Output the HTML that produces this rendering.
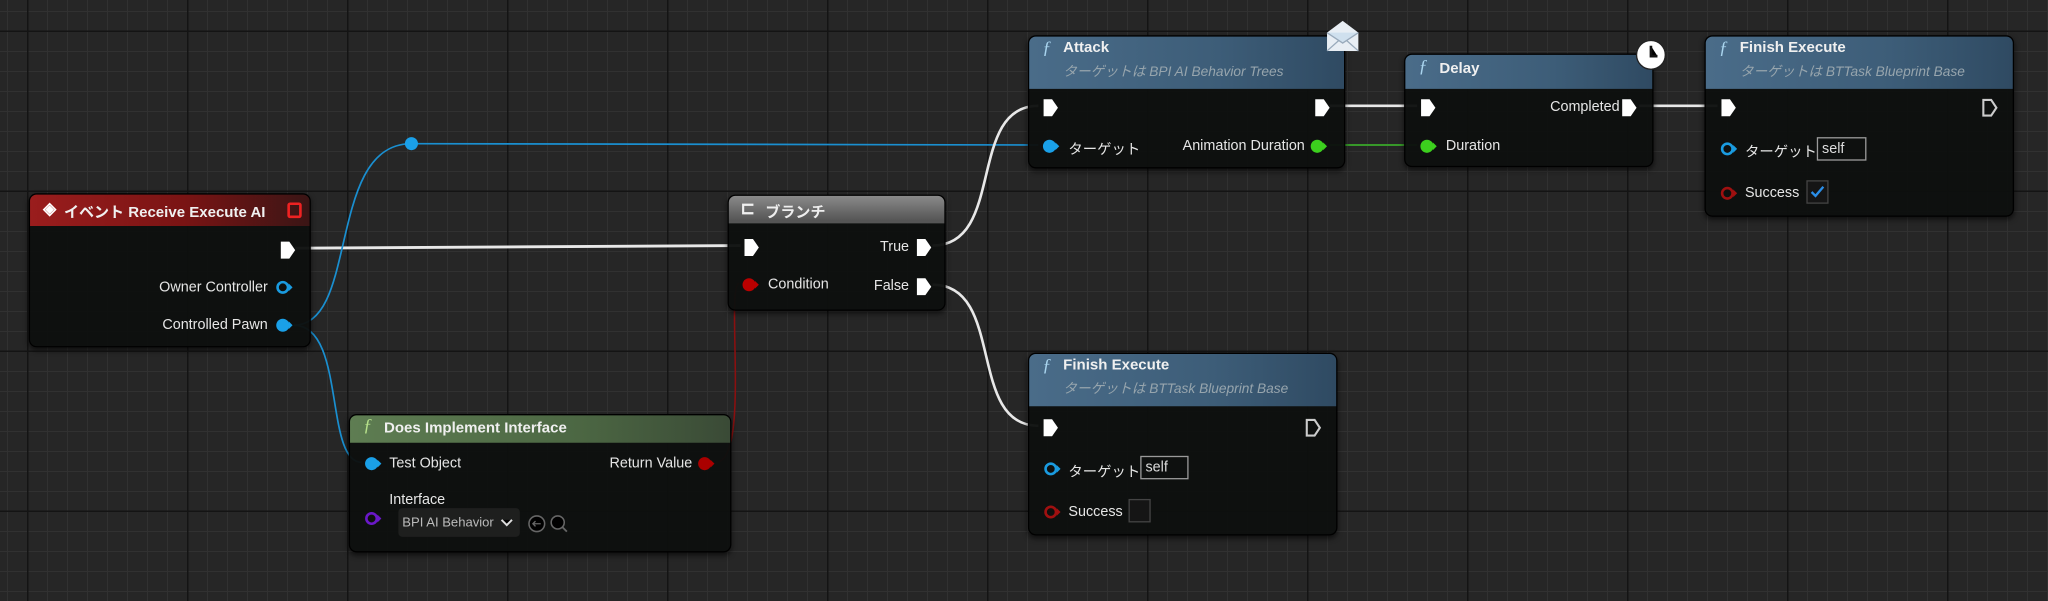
<!DOCTYPE html>
<html><head><meta charset="utf-8">
<style>
html,body{margin:0;padding:0;width:2048px;height:601px;overflow:hidden;}
body{background-color:#262626;
background-image:
linear-gradient(90deg,#141414 1.5px,transparent 1.5px),
linear-gradient(0deg,#141414 1.5px,transparent 1.5px),
linear-gradient(90deg,#313131 1px,transparent 1px),
linear-gradient(0deg,#313131 1px,transparent 1px);
background-size:160px 160px,160px 160px,20px 20px,20px 20px;
background-position:27px 0,0 32px,7px 0,0 12px;
font-family:"Liberation Sans","Noto Sans CJK JP",sans-serif;}
#c{position:absolute;left:0;top:0;width:1568px;height:460px;transform:scale(1.30612);transform-origin:0 0;}
.n{position:absolute;background:rgba(14,16,15,0.96);border:1px solid #000;border-radius:6px;box-shadow:0 2px 4px rgba(0,0,0,.6);overflow:visible;}
.h{position:absolute;left:0;top:0;right:0;border-radius:5px 5px 0 0;color:#f0f0f0;font-weight:bold;font-size:11.5px;}
.h .t{position:absolute;left:26px;top:3px;}
.h .s{position:absolute;left:26px;top:19px;font-style:italic;font-weight:normal;font-size:10.5px;color:#97a5ad;}
.h .f{position:absolute;left:10px;top:2px;font-family:"Liberation Serif",serif;font-style:italic;font-weight:normal;font-size:14px;color:#a9d4ee;}
.blue{background:linear-gradient(90deg,#4a6c89,#3d5d78 60%,#2f4a62);height:40px;}
.lbl{position:absolute;color:#e6e6e6;font-size:11px;white-space:nowrap;}
.box{position:absolute;border:1px solid #9a9a9a;color:#ddd;font-size:11px;padding:0 3px;height:16px;line-height:16px;}
</style></head><body>
<div id="c">
<svg width="1568" height="460" style="position:absolute;left:0;top:0" fill="none">
<path d="M226 190 C400 190 400 188 567 188" stroke="#e8e8e8" stroke-width="2.2"/>
<path d="M225 249 C275 249 250 110 315 110 L795 111" stroke="#1a8fd0" stroke-width="1.3"/>
<path d="M225 249 C265 249 248 354 277 354" stroke="#1a8fd0" stroke-width="1.3"/>
<path d="M714 188 C770 188 740 81 795 81" stroke="#e8e8e8" stroke-width="2"/>
<path d="M714 218 C770 218 740 326 795 326" stroke="#e8e8e8" stroke-width="2"/>
<path d="M1018 81 L1085 81" stroke="#e8e8e8" stroke-width="2"/>
<path d="M1018 111 L1085 111" stroke="#3aa82a" stroke-width="1.3"/>
<path d="M1255 81 L1315 81" stroke="#e8e8e8" stroke-width="2"/>
<path d="M548 354 C575 354 555 217 566 217" stroke="#8a1010" stroke-width="1.2"/>
<circle cx="315" cy="110" r="5" fill="#1aa0e8"/>
</svg>

<!-- Event -->
<div class="n" style="left:22px;top:148px;width:214px;height:116px;">
 <div class="h" style="height:24px;background:linear-gradient(90deg,#9a1d1d,#7a1414 55%,#3a1515);">
  <span style="position:absolute;left:10px;top:3px;color:#fff;font-size:13px;">◈</span>
  <span class="t" style="top:5px;">イベント Receive Execute AI</span>
  <span style="position:absolute;right:6px;top:6px;width:7px;height:8px;border:2px solid #e22;border-radius:2px;"></span>
 </div>
 <svg style="position:absolute;left:191px;top:35px" width="13" height="15"><path d="M1 1h6.5l4.5 6.5-4.5 6.5H1z" fill="#fff"/></svg>
 <div class="lbl" style="right:32px;top:65px;">Owner Controller</div>
 <svg style="position:absolute;left:188px;top:65px" width="14" height="12"><circle cx="5.5" cy="6" r="4" stroke="#1a9be0" stroke-width="2" fill="none"/><path d="M10 3l3 3-3 3z" fill="#1a9be0"/></svg>
 <div class="lbl" style="right:32px;top:94px;">Controlled Pawn</div>
 <svg style="position:absolute;left:188px;top:94px" width="14" height="12"><circle cx="5.5" cy="6" r="5" fill="#1aa0e8"/><path d="M10 3l3 3-3 3z" fill="#1aa0e8"/></svg>
</div>

<!-- Branch -->
<div class="n" style="left:557px;top:149px;width:165px;height:87px;">
 <div class="h" style="height:21px;background:linear-gradient(180deg,#8a8a8a,#555 90%);">
  <span style="position:absolute;left:9px;top:2px;font-size:13px;">⊏</span>
  <span class="t" style="left:28px;top:4px;color:#eee;">ブランチ</span>
 </div>
 <svg style="position:absolute;left:11px;top:32px" width="13" height="15"><path d="M1 1h6.5l4.5 6.5-4.5 6.5H1z" fill="#fff"/></svg>
 <div class="lbl" style="right:27px;top:33px;">True</div>
 <svg style="position:absolute;left:143px;top:32px" width="13" height="15"><path d="M1 1h6.5l4.5 6.5-4.5 6.5H1z" fill="#fff"/></svg>
 <svg style="position:absolute;left:10px;top:62px" width="14" height="12"><circle cx="5.5" cy="6" r="5" fill="#b00"/><path d="M10 3l3 3-3 3z" fill="#b00"/></svg>
 <div class="lbl" style="left:30px;top:62px;">Condition</div>
 <div class="lbl" style="right:27px;top:63px;">False</div>
 <svg style="position:absolute;left:143px;top:62px" width="13" height="15"><path d="M1 1h6.5l4.5 6.5-4.5 6.5H1z" fill="#fff"/></svg>
</div>

<!-- Does Implement Interface -->
<div class="n" style="left:267px;top:317px;width:291px;height:104px;">
 <div class="h" style="height:21px;background:linear-gradient(90deg,#5e7d52,#4c6743 60%,#3a4a36);">
  <span class="f" style="top:1px;color:#b5e08a;">ƒ</span><span class="t" style="top:4px;">Does Implement Interface</span>
 </div>
 <svg style="position:absolute;left:11px;top:31px" width="14" height="12"><circle cx="5.5" cy="6" r="5" fill="#1aa0e8"/><path d="M10 3l3 3-3 3z" fill="#1aa0e8"/></svg>
 <div class="lbl" style="left:30px;top:31px;">Test Object</div>
 <div class="lbl" style="right:29px;top:31px;">Return Value</div>
 <svg style="position:absolute;left:266px;top:31px" width="14" height="12"><circle cx="5.5" cy="6" r="5" fill="#a00"/><path d="M10 3l3 3-3 3z" fill="#a00"/></svg>
 <div class="lbl" style="left:30px;top:59px;">Interface</div>
 <svg style="position:absolute;left:11px;top:73px" width="14" height="12"><circle cx="5.5" cy="6" r="4" stroke="#6a18c8" stroke-width="2" fill="none"/><path d="M10 3l3 3-3 3z" fill="#6a18c8"/></svg>
 <div style="position:absolute;left:37px;top:71px;width:93px;height:22px;background:#1e1f1e;border-radius:3px;"></div>
 <div class="lbl" style="left:40px;top:77px;font-size:10px;color:#bbb;">BPI AI Behavior</div>
 <svg style="position:absolute;left:114px;top:77px" width="12" height="10"><path d="M2 3l4 4 4-4" stroke="#ddd" stroke-width="1.5"/></svg>
 <svg style="position:absolute;left:136px;top:75px" width="34" height="16"><circle cx="7" cy="8" r="6" stroke="#666" stroke-width="1.2"/><path d="M10 8H4m2-2-2 2 2 2" stroke="#666"/><circle cx="23" cy="7" r="5" stroke="#666" stroke-width="1.2"/><path d="M26.5 10.5 30 14" stroke="#666" stroke-width="1.4"/></svg>
</div>

<!-- Attack -->
<div class="n" style="left:787px;top:27px;width:241px;height:100px;">
 <div class="h blue"><span class="f">ƒ</span><span class="t">Attack</span><span class="s">ターゲットは BPI AI Behavior Trees</span></div>
 <svg style="position:absolute;left:10px;top:47px" width="13" height="15"><path d="M1 1h6.5l4.5 6.5-4.5 6.5H1z" fill="#fff"/></svg>
 <svg style="position:absolute;left:218px;top:47px" width="13" height="15"><path d="M1 1h6.5l4.5 6.5-4.5 6.5H1z" fill="#fff"/></svg>
 <svg style="position:absolute;left:10px;top:78px" width="14" height="12"><circle cx="5.5" cy="6" r="5" fill="#1aa0e8"/><path d="M10 3l3 3-3 3z" fill="#1aa0e8"/></svg>
 <div class="lbl" style="left:30px;top:78px;">ターゲット</div>
 <div class="lbl" style="right:30px;top:78px;">Animation Duration</div>
 <svg style="position:absolute;left:215px;top:78px" width="14" height="12"><circle cx="5.5" cy="6" r="5" fill="#3ccf1e"/><path d="M10 3l3 3-3 3z" fill="#3ccf1e"/></svg>
</div>
<svg style="position:absolute;left:1014px;top:15px" width="28" height="26"><path d="M2 10 14 1l12 9v14H2z" fill="#e8eef4"/><path d="M2 10l12 8 12-8" stroke="#9ab" stroke-width="1" fill="#cfe0ee"/><path d="M2 24l9-8m15 8-9-8" stroke="#9ab"/></svg>

<!-- Delay -->
<div class="n" style="left:1075px;top:41px;width:189px;height:85px;">
 <div class="h blue" style="height:26px;"><span class="f">ƒ</span><span class="t" style="top:5px;">Delay</span></div>
 <svg style="position:absolute;left:11px;top:33px" width="13" height="15"><path d="M1 1h6.5l4.5 6.5-4.5 6.5H1z" fill="#fff"/></svg>
 <div class="lbl" style="right:25px;top:34px;">Completed</div>
 <svg style="position:absolute;left:165px;top:33px" width="13" height="15"><path d="M1 1h6.5l4.5 6.5-4.5 6.5H1z" fill="#fff"/></svg>
 <svg style="position:absolute;left:11px;top:64px" width="14" height="12"><circle cx="5.5" cy="6" r="5" fill="#3ccf1e"/><path d="M10 3l3 3-3 3z" fill="#3ccf1e"/></svg>
 <div class="lbl" style="left:31px;top:64px;">Duration</div>
</div>
<svg style="position:absolute;left:1251px;top:29px" width="26" height="26"><circle cx="13" cy="13" r="11" fill="#fff" stroke="#222" stroke-width="1"/><path d="M13 6v8h5" stroke="#111" stroke-width="2"/></svg>

<!-- Finish Execute top -->
<div class="n" style="left:1305px;top:27px;width:235px;height:137px;">
 <div class="h blue"><span class="f">ƒ</span><span class="t">Finish Execute</span><span class="s">ターゲットは BTTask Blueprint Base</span></div>
 <svg style="position:absolute;left:11px;top:47px" width="13" height="15"><path d="M1 1h6.5l4.5 6.5-4.5 6.5H1z" fill="#fff"/></svg>
 <svg style="position:absolute;left:211px;top:47px" width="13" height="15"><path d="M1.5 1.5h6l4 6-4 6h-6z" stroke="#ccc" stroke-width="1.6" fill="none"/></svg>
 <svg style="position:absolute;left:11px;top:80px" width="14" height="12"><circle cx="5.5" cy="6" r="4" stroke="#1a9be0" stroke-width="2" fill="none"/><path d="M10 3l3 3-3 3z" fill="#1a9be0"/></svg>
 <div class="lbl" style="left:30px;top:80px;">ターゲット</div>
 <div class="box" style="left:85px;top:77px;width:30px;">self</div>
 <svg style="position:absolute;left:11px;top:114px" width="14" height="12"><circle cx="5.5" cy="6" r="4" stroke="#a01010" stroke-width="2" fill="none"/><path d="M10 3l3 3-3 3z" fill="#a01010"/></svg>
 <div class="lbl" style="left:30px;top:114px;">Success</div>
 <div style="position:absolute;left:77px;top:110px;width:15px;height:16px;border:1px solid #444;background:#151515;"></div>
 <svg style="position:absolute;left:78px;top:112px" width="14" height="14"><path d="M3 7l3 3 6-7" stroke="#2a8ee8" stroke-width="1.8" fill="none"/></svg>
</div>

<!-- Finish Execute bottom -->
<div class="n" style="left:787px;top:270px;width:235px;height:138px;">
 <div class="h blue"><span class="f">ƒ</span><span class="t">Finish Execute</span><span class="s">ターゲットは BTTask Blueprint Base</span></div>
 <svg style="position:absolute;left:10px;top:49px" width="13" height="15"><path d="M1 1h6.5l4.5 6.5-4.5 6.5H1z" fill="#fff"/></svg>
 <svg style="position:absolute;left:211px;top:49px" width="13" height="15"><path d="M1.5 1.5h6l4 6-4 6h-6z" stroke="#ccc" stroke-width="1.6" fill="none"/></svg>
 <svg style="position:absolute;left:11px;top:82px" width="14" height="12"><circle cx="5.5" cy="6" r="4" stroke="#1a9be0" stroke-width="2" fill="none"/><path d="M10 3l3 3-3 3z" fill="#1a9be0"/></svg>
 <div class="lbl" style="left:30px;top:82px;">ターゲット</div>
 <div class="box" style="left:85px;top:78px;width:29px;">self</div>
 <svg style="position:absolute;left:11px;top:115px" width="14" height="12"><circle cx="5.5" cy="6" r="4" stroke="#a01010" stroke-width="2" fill="none"/><path d="M10 3l3 3-3 3z" fill="#a01010"/></svg>
 <div class="lbl" style="left:30px;top:115px;">Success</div>
 <div style="position:absolute;left:76px;top:111px;width:15px;height:16px;border:1px solid #444;background:#151515;"></div>
</div>
</div>
</body></html>
